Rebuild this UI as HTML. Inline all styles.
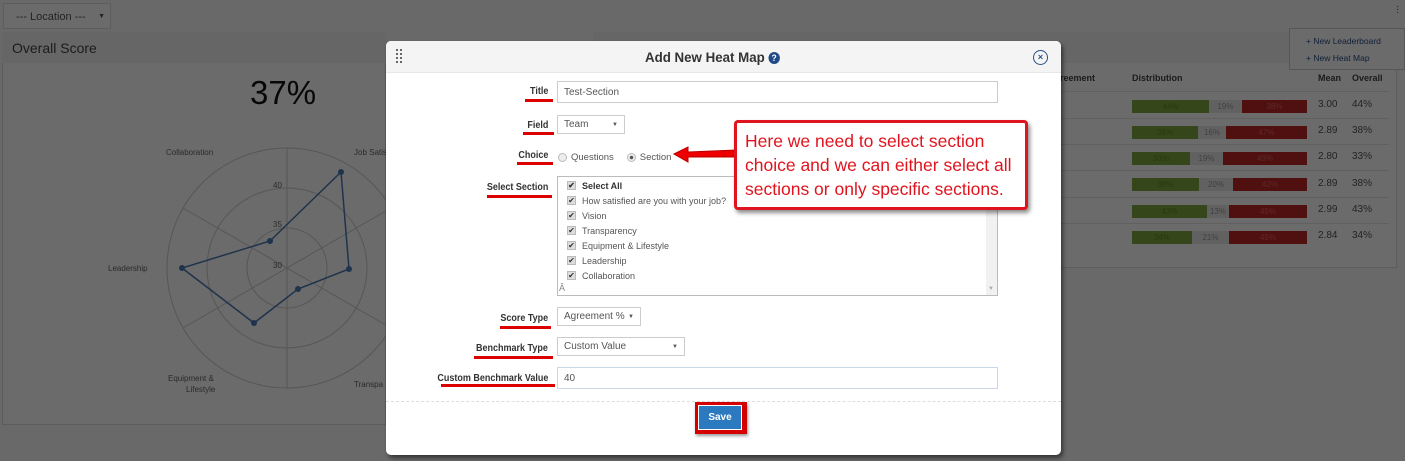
<!DOCTYPE html>
<html><head><style>
*{box-sizing:border-box;margin:0;padding:0}
body{width:1405px;height:461px;background:#fafafa;font-family:"Liberation Sans",sans-serif;position:relative;overflow:hidden;color:#333}
.abs{position:absolute}
.lbl{position:absolute;right:857px;font-size:10px;font-weight:bold;color:#333;text-align:right;white-space:nowrap;transform:scaleX(.9);transform-origin:right}
.ul{position:absolute;height:3px;background:#d00}
.inp{position:absolute;border:1px solid #ccc;background:#fff;font-size:10px;color:#555;padding-left:6px;display:flex;align-items:center}
.cb{display:flex;align-items:center;font-size:9px;color:#555;height:15px}
.cb i{display:inline-block;width:9px;height:9px;background:#ddd;border:1px solid #bbb;margin-right:6px;font-style:normal;font-size:8px;line-height:8px;text-align:center;color:#333}
.row{position:absolute;left:1132px;height:13px;display:flex;font-size:8px;color:#555;line-height:13px;text-align:center}
.g{background:#7fa63e;color:#5f8a20}.m{background:#e8e8e8;color:#999}.r{background:#c22828;color:#d86060}
.num{position:absolute;font-size:10px;color:#555}
</style></head><body>
<div class="abs" style="left:3px;top:3px;width:108px;height:26px;border:1px solid #ddd;background:#fff;font-size:11px;color:#555;padding:7px 0 0 12px">--- Location ---<span style="position:absolute;right:5px;font-size:7px;top:9px">▼</span></div>
<div class="abs" style="left:2px;top:32px;width:384px;height:393px;border:1px solid #ddd;background:#fff"></div>
<div class="abs" style="left:2px;top:32px;width:384px;height:31px;background:#f2f2f2;font-size:14px;color:#444;padding:8px 10px">Overall Score</div>
<div class="abs" style="left:250px;top:74px;font-size:33px;color:#111">37%</div>
<svg class="abs" style="left:0;top:0" width="390" height="440">
<g fill="none" stroke="#ccc" stroke-width="1">
<circle cx="287" cy="268" r="40"/><circle cx="287" cy="268" r="80"/><circle cx="287" cy="268" r="120"/>
<line x1="287" y1="148" x2="287" y2="388"/>
<line x1="183" y1="208" x2="391" y2="328"/><line x1="183" y1="328" x2="391" y2="208"/>
</g>
<polygon points="341,172 349,269 298,289 254,323 182,268 270,241" fill="none" stroke="#4b7bb5" stroke-width="1.5"/>
<g fill="#4b7bb5"><circle cx="341" cy="172" r="3"/><circle cx="349" cy="269" r="3"/><circle cx="298" cy="289" r="3"/><circle cx="254" cy="323" r="3"/><circle cx="182" cy="268" r="3"/><circle cx="270" cy="241" r="3"/></g>
<g font-size="8" fill="#666" font-family="Liberation Sans">
<text x="166" y="155">Collaboration</text><text x="354" y="155">Job Satis</text>
<text x="108" y="271">Leadership</text><text x="273" y="188">40</text><text x="273" y="227">35</text><text x="273" y="268">30</text>
<text x="168" y="381">Equipment &amp;</text><text x="186" y="392">Lifestyle</text><text x="354" y="387">Transpa</text>
</g></svg>
<div class="abs" style="left:593px;top:32px;width:804px;height:236px;border:1px solid #ddd;background:#fff"></div>
<div class="abs" style="left:593px;top:32px;width:804px;height:31px;background:#f2f2f2"></div>
<div class="abs" style="left:1396px;top:5px;width:3px;font-size:10px;line-height:3px;color:#555">·<br>·<br>·</div>
<div class="num" style="left:1060px;top:73px;font-weight:bold;font-size:9px;color:#444">reement</div>
<div class="num" style="left:1132px;top:73px;font-weight:bold;font-size:9px;color:#444">Distribution</div>
<div class="num" style="left:1318px;top:73px;font-weight:bold;font-size:9px;color:#444">Mean</div>
<div class="num" style="left:1352px;top:73px;font-weight:bold;font-size:9px;color:#444">Overall</div>
<div class="row" style="top:100px"><div class="g" style="width:77px">44%</div><div class="m" style="width:33px">19%</div><div class="r" style="width:65px">38%</div></div>
<div class="row" style="top:126px"><div class="g" style="width:66px">38%</div><div class="m" style="width:28px">16%</div><div class="r" style="width:81px">47%</div></div>
<div class="row" style="top:152px"><div class="g" style="width:58px">33%</div><div class="m" style="width:33px">19%</div><div class="r" style="width:84px">49%</div></div>
<div class="row" style="top:178px"><div class="g" style="width:67px">38%</div><div class="m" style="width:34px">20%</div><div class="r" style="width:74px">42%</div></div>
<div class="row" style="top:205px"><div class="g" style="width:75px">43%</div><div class="m" style="width:22px">13%</div><div class="r" style="width:78px">45%</div></div>
<div class="row" style="top:231px"><div class="g" style="width:60px">34%</div><div class="m" style="width:37px">21%</div><div class="r" style="width:78px">45%</div></div>
<div class="num" style="left:1318px;top:99px">3.00</div><div class="num" style="left:1352px;top:99px">44%</div>
<div class="num" style="left:1318px;top:125px">2.89</div><div class="num" style="left:1352px;top:125px">38%</div>
<div class="num" style="left:1318px;top:151px">2.80</div><div class="num" style="left:1352px;top:151px">33%</div>
<div class="num" style="left:1318px;top:178px">2.89</div><div class="num" style="left:1352px;top:178px">38%</div>
<div class="num" style="left:1318px;top:204px">2.99</div><div class="num" style="left:1352px;top:204px">43%</div>
<div class="num" style="left:1318px;top:230px">2.84</div><div class="num" style="left:1352px;top:230px">34%</div>
<div class="abs" style="left:1058px;top:91px;width:331px;height:1px;background:#e5e5e5"></div>
<div class="abs" style="left:1058px;top:118px;width:331px;height:1px;background:#e5e5e5"></div>
<div class="abs" style="left:1058px;top:144px;width:331px;height:1px;background:#e5e5e5"></div>
<div class="abs" style="left:1058px;top:170px;width:331px;height:1px;background:#e5e5e5"></div>
<div class="abs" style="left:1058px;top:197px;width:331px;height:1px;background:#e5e5e5"></div>
<div class="abs" style="left:1058px;top:223px;width:331px;height:1px;background:#e5e5e5"></div>
<div class="abs" style="left:1289px;top:28px;width:116px;height:42px;background:#fff;border:1px solid #ccc;font-size:8.5px;color:#2c4f86;padding:4px 0 0 16px;line-height:17px">+ New Leaderboard<br>+ New Heat Map</div>

<div class="abs" style="left:0;top:0;width:1405px;height:461px;background:rgba(0,0,0,.58)"></div>

<div class="abs" style="left:386px;top:41px;width:675px;height:414px;background:#fff;border-radius:5px;box-shadow:2px 3px 4px rgba(0,0,0,.5)"></div>
<div class="abs" style="left:386px;top:41px;width:675px;height:32px;background:#f4f4f4;border-radius:5px 5px 0 0;border-bottom:1px solid #e6e6e6"></div>
<svg class="abs" style="left:396px;top:49px" width="8" height="16"><g fill="#666"><rect x="0" y="0" width="2" height="2"/><rect x="4" y="0" width="2" height="2"/><rect x="0" y="4" width="2" height="2"/><rect x="4" y="4" width="2" height="2"/><rect x="0" y="8" width="2" height="2"/><rect x="4" y="8" width="2" height="2"/><rect x="0" y="12" width="2" height="2"/><rect x="4" y="12" width="2" height="2"/></g></svg>
<div class="abs" style="left:645px;top:49px;font-size:14px;font-weight:bold;color:#333;transform:scaleX(.95);transform-origin:left">Add New Heat Map <span style="display:inline-block;width:12px;height:12px;border-radius:50%;background:#1f4a85;color:#fff;font-size:9px;text-align:center;line-height:12px;vertical-align:1px">?</span></div>
<div class="abs" style="left:1033px;top:50px;width:15px;height:15px;border:1.5px solid #2a4f8a;border-radius:50%;color:#2a4f8a;font-size:9px;font-weight:bold;text-align:center;line-height:12px">×</div>

<div class="lbl" style="top:86px">Title</div><div class="ul" style="left:525px;top:99px;width:28px"></div>
<div class="inp" style="left:557px;top:81px;width:441px;height:22px">Test-Section</div>
<div class="lbl" style="top:120px">Field</div><div class="ul" style="left:523px;top:132px;width:31px"></div>
<div class="inp" style="left:557px;top:115px;width:68px;height:19px">Team<span style="position:absolute;right:6px;font-size:6px">▼</span></div>
<div class="lbl" style="top:150px">Choice</div><div class="ul" style="left:517px;top:162px;width:36px"></div>
<div class="abs" style="left:558px;top:152px;font-size:9.5px;color:#555;display:flex;align-items:center"><span style="display:inline-block;width:9px;height:9px;border-radius:50%;border:1px solid #bbb;background:#eee;margin-right:4px"></span>Questions<span style="display:inline-block;width:9px;height:9px;border-radius:50%;border:1px solid #bbb;background:radial-gradient(#555 30%,#eee 40%);margin:0 4px 0 13px"></span>Section</div>
<div class="lbl" style="top:182px">Select Section</div><div class="ul" style="left:487px;top:195px;width:65px"></div>
<div class="abs" style="left:557px;top:176px;width:441px;height:120px;border:1px solid #bbb;background:#fff;padding:1px 0 0 9px">
<div class="cb" style="font-weight:bold;color:#333"><i>✔</i>Select All</div>
<div class="cb"><i>✔</i>How satisfied are you with your job?</div>
<div class="cb"><i>✔</i>Vision</div>
<div class="cb"><i>✔</i>Transparency</div>
<div class="cb"><i>✔</i>Equipment &amp; Lifestyle</div>
<div class="cb"><i>✔</i>Leadership</div>
<div class="cb"><i>✔</i>Collaboration</div>
<div style="font-size:9px;color:#888;margin-left:-8px">Â</div>
<div style="position:absolute;right:0;top:0;width:11px;height:118px;background:#f1f1f1"></div>
<div style="position:absolute;right:3px;bottom:3px;font-size:6px;color:#aaa">▼</div>
</div>
<div class="lbl" style="top:313px">Score Type</div><div class="ul" style="left:500px;top:326px;width:51px"></div>
<div class="inp" style="left:557px;top:307px;width:84px;height:19px">Agreement %<span style="position:absolute;right:6px;font-size:6px">▼</span></div>
<div class="lbl" style="top:343px">Benchmark Type</div><div class="ul" style="left:474px;top:356px;width:79px"></div>
<div class="inp" style="left:557px;top:337px;width:128px;height:19px">Custom Value<span style="position:absolute;right:6px;font-size:6px">▼</span></div>
<div class="lbl" style="top:373px">Custom Benchmark Value</div><div class="ul" style="left:441px;top:384px;width:114px"></div>
<div class="inp" style="left:557px;top:367px;width:441px;height:22px;border-color:#c8d8e6">40</div>
<div class="abs" style="left:386px;top:401px;width:675px;border-top:1px dashed #ddd"></div>
<div class="abs" style="left:695px;top:402px;width:52px;height:32px;background:#d40000;box-shadow:1px 2px 3px rgba(0,0,0,.4)"></div>
<div class="abs" style="left:698px;top:405px;width:44px;height:25px;background:#2b7ac0;border:1px solid #fff;color:#fff;font-size:10px;font-weight:bold;text-align:center;line-height:23px">Save</div>

<svg class="abs" style="left:668px;top:118px" width="380" height="100">
<polygon points="6,36 20,29 20,34 68,32 68,39 20,39 20,44" fill="#e00" stroke="#b00" stroke-width="1"/>
</svg>
<div class="abs" style="left:734px;top:120px;width:294px;height:90px;background:#fff;border:3px solid #e0141e;border-radius:4px;box-shadow:2px 3px 4px rgba(0,0,0,.45);font-size:17.5px;color:#e0141e;padding:6px 0 0 8px;line-height:24px">Here we need to select section choice and we can either select all sections or only specific sections.</div>
</body></html>
